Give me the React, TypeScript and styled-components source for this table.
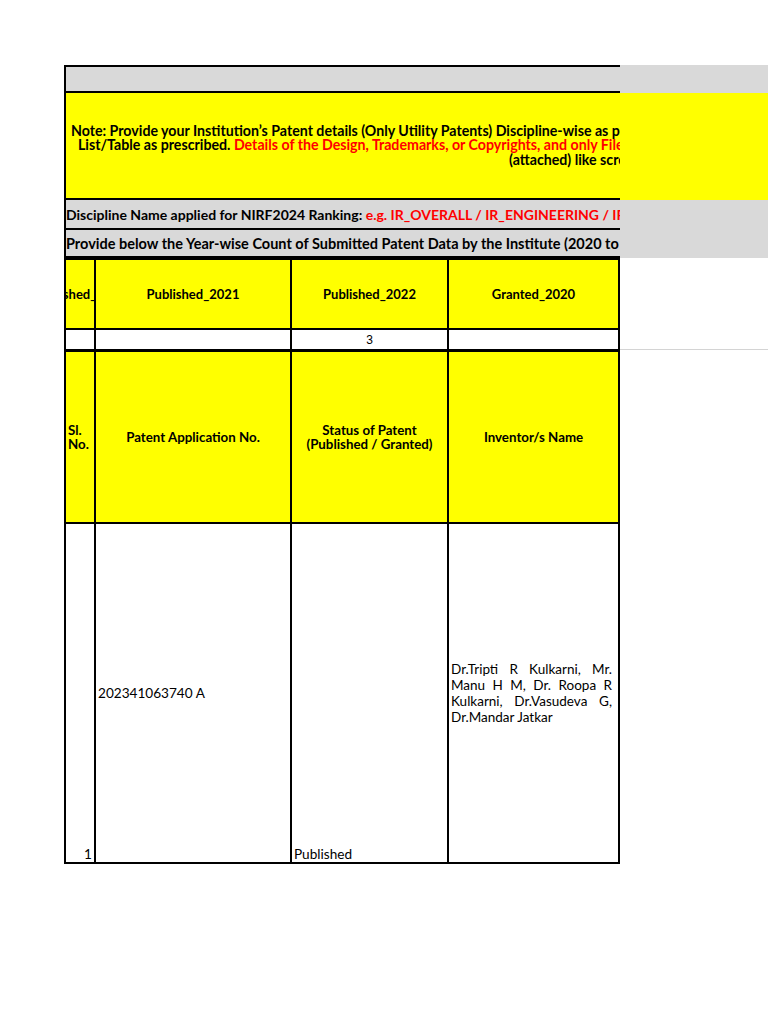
import React from "react";
import styled, { createGlobalStyle } from "styled-components";

const Global = createGlobalStyle`
  html, body { margin: 0; padding: 0; background: #ffffff; }
  body { font-family: Lato, "Open Sans", sans-serif; color: #000; }
`;

const Page = styled.div`
  padding-top: 65px;
  padding-left: 64px;
  width: 704px;
`;

const BannerRow = styled.div<{ $bg: string; $h: number }>`
  display: flex;
  height: ${(p) => p.$h}px;
  background: ${(p) => p.$bg};
`;

const BannerCell = styled.div<{ $top?: boolean }>`
  box-sizing: border-box;
  width: 556px;
  flex: none;
  border-left: 2px solid #000;
  border-top: ${(p) => (p.$top ? "2px solid #000" : "none")};
  border-bottom: 2px solid #000;
  overflow: hidden;
  display: flex;
  flex-direction: column;
  justify-content: center;
  font-weight: 700;
  font-size: 14.2px;
  white-space: nowrap;
`;

const NoteLine = styled.div<{ $indent: number }>`
  padding-left: ${(p) => p.$indent}px;
  line-height: 14.5px;
  white-space: nowrap;
`;

const Red = styled.span`
  color: #ff0000;
`;

const BannerText = styled.div<{ $size?: number }>`
  line-height: 16px;
  font-size: ${(p) => p.$size || 14.3}px;
  padding-top: 1px;
`;

const TableArea = styled.div`
  display: flex;
`;

const Grid = styled.div`
  flex: none;
  width: 556px;
  display: grid;
  grid-template-columns: 32px 196px 157px 171px;
  grid-template-rows: 72px 19px 175px 340px;
`;

const Cell = styled.div<{
  $bg?: string;
  $top?: number;
  $bottom?: number;
  $left?: boolean;
  $justify?: string;
  $align?: string;
  $bold?: boolean;
  $size?: number;
  $textAlign?: string;
}>`
  box-sizing: border-box;
  background: ${(p) => p.$bg || "#fff"};
  border-right: 2px solid #000;
  border-left: ${(p) => (p.$left ? "2px solid #000" : "none")};
  border-top: ${(p) => (p.$top ? `${p.$top}px solid #000` : "none")};
  border-bottom: ${(p) => (p.$bottom ? `${p.$bottom}px solid #000` : "none")};
  overflow: hidden;
  display: flex;
  justify-content: ${(p) => p.$justify || "center"};
  align-items: ${(p) => p.$align || "center"};
  text-align: ${(p) => p.$textAlign || "center"};
  font-weight: ${(p) => (p.$bold ? 700 : 400)};
  font-size: ${(p) => p.$size || 13}px;
  line-height: 14px;
  padding: 0 2px;
`;

const NoWrap = styled.span`
  white-space: nowrap;
`;

const ArialNum = styled.span`
  font-family: "Liberation Sans", Arial, sans-serif;
  font-size: 12px;
`;

const Inventors = styled.div`
  text-align: justify;
  font-size: 13.5px;
  line-height: 16px;
  width: 100%;
  padding-right: 4px;
`;

const BodyText = styled.span`
  padding-bottom: 1px;
  font-size: 13.6px;
`;

const Filler = styled.div`
  flex: 1;
`;

const GridLine = styled.div`
  height: 91px;
  border-bottom: 1px solid #d4d4d4;
`;

export default function App() {
  return (
    <>
      <Global />
      <Page>
        <BannerRow $bg="#d9d9d9" $h={28}>
          <BannerCell $top />
        </BannerRow>
        <BannerRow $bg="#ffff00" $h={107}>
          <BannerCell>
            <NoteLine $indent={5}>
              Note: Provide your Institution’s Patent details (Only Utility Patents) Discipline-wise as per
            </NoteLine>
            <NoteLine $indent={12}>
              List/Table as prescribed. <Red>Details of the Design, Trademarks, or Copyrights, and only Filed</Red>
            </NoteLine>
            <NoteLine $indent={443}>(attached) like screenshots</NoteLine>
          </BannerCell>
        </BannerRow>
        <BannerRow $bg="#d9d9d9" $h={30}>
          <BannerCell>
            <BannerText $size={14}>
              Discipline Name applied for NIRF2024 Ranking:{" "}
              <Red>e.g. IR_OVERALL / IR_ENGINEERING / IR_MANAGEMENT</Red>
            </BannerText>
          </BannerCell>
        </BannerRow>
        <BannerRow $bg="#d9d9d9" $h={28}>
          <BannerCell>
            <BannerText $size={14.5}>
              Provide below the Year-wise Count of Submitted Patent Data by the Institute (2020 to 2022)
            </BannerText>
          </BannerCell>
        </BannerRow>
        <TableArea>
          <Grid>
            <Cell $bg="#ffff00" $left $bold $top={2} $bottom={2}>
              <NoWrap>Published_2020</NoWrap>
            </Cell>
            <Cell $bg="#ffff00" $bold $top={2} $bottom={2}>
              Published_2021
            </Cell>
            <Cell $bg="#ffff00" $bold $top={2} $bottom={2}>
              Published_2022
            </Cell>
            <Cell $bg="#ffff00" $bold $top={2} $bottom={2}>
              Granted_2020
            </Cell>

            <Cell $left />
            <Cell />
            <Cell>
              <ArialNum>3</ArialNum>
            </Cell>
            <Cell />

            <Cell $bg="#ffff00" $left $bold $size={13.3} $top={3} $bottom={2} $justify="flex-start" $textAlign="left">
              Sl.
              <br />
              No.
            </Cell>
            <Cell $bg="#ffff00" $bold $size={13.3} $top={3} $bottom={2}>
              Patent Application No.
            </Cell>
            <Cell $bg="#ffff00" $bold $size={13.3} $top={3} $bottom={2}>
              Status of Patent
              <br />
              (Published / Granted)
            </Cell>
            <Cell $bg="#ffff00" $bold $size={13.3} $top={3} $bottom={2}>
              Inventor/s Name
            </Cell>

            <Cell $left $bottom={2} $justify="flex-end" $align="flex-end">
              <BodyText>1</BodyText>
            </Cell>
            <Cell $bottom={2} $justify="flex-start" $textAlign="left">
              <BodyText>202341063740 A</BodyText>
            </Cell>
            <Cell $bottom={2} $justify="flex-start" $align="flex-end" $textAlign="left">
              <BodyText>Published</BodyText>
            </Cell>
            <Cell $bottom={2} $justify="flex-start" $textAlign="left">
              <Inventors>
                Dr.Tripti R Kulkarni, Mr. Manu H M, Dr. Roopa R Kulkarni, Dr.Vasudeva G, Dr.Mandar Jatkar
              </Inventors>
            </Cell>
          </Grid>
          <Filler>
            <GridLine />
          </Filler>
        </TableArea>
      </Page>
    </>
  );
}
